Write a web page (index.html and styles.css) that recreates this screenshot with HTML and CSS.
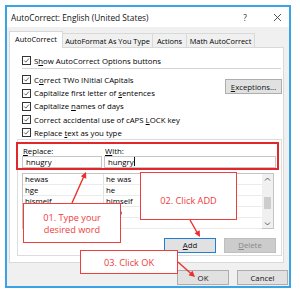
FILE: index.html
```html
<!DOCTYPE html>
<html>
<head>
<meta charset="utf-8">
<link rel="stylesheet" href="styles.css">
</head>
<body>
<div class="window">
  <div class="titlebar">
    <span class="title">AutoCorrect: English (United States)</span>
    <span class="help">?</span>
    <span class="close"><svg width="9" height="9" viewBox="0 0 9 9"><path d="M1 1L8 8M8 1L1 8" stroke="#444" stroke-width="0.9" fill="none"/></svg></span>
  </div>
  <div class="tabs">
    <div class="tab active t1">AutoCorrect</div>
    <div class="tab t2">AutoFormat As You Type</div>
    <div class="tab t3">Actions</div>
    <div class="tab t4">Math AutoCorrect</div>
  </div>
  <div class="panel">
    <div class="check"><span class="box"><svg width="9" height="9" viewBox="0 0 9 9"><path d="M1.6 4.6L3.6 6.6L7.6 2" stroke="#333" stroke-width="1" fill="none"/></svg></span><span>S<u>h</u>ow AutoCorrect Options buttons</span></div>
    <div class="sep"></div>
    <div class="opts">
      <div class="optlist">
        <div class="check"><span class="box"><svg width="9" height="9" viewBox="0 0 9 9"><path d="M1.6 4.6L3.6 6.6L7.6 2" stroke="#333" stroke-width="1" fill="none"/></svg></span><span>C<u>o</u>rrect TWo INitial CApitals</span></div>
        <div class="check"><span class="box"><svg width="9" height="9" viewBox="0 0 9 9"><path d="M1.6 4.6L3.6 6.6L7.6 2" stroke="#333" stroke-width="1" fill="none"/></svg></span><span>Capitalize first letter of <u>s</u>entences</span></div>
        <div class="check"><span class="box"><svg width="9" height="9" viewBox="0 0 9 9"><path d="M1.6 4.6L3.6 6.6L7.6 2" stroke="#333" stroke-width="1" fill="none"/></svg></span><span>Capitalize <u>n</u>ames of days</span></div>
        <div class="check"><span class="box"><svg width="9" height="9" viewBox="0 0 9 9"><path d="M1.6 4.6L3.6 6.6L7.6 2" stroke="#333" stroke-width="1" fill="none"/></svg></span><span>Correct accidental use of cAPS <u>L</u>OCK key</span></div>
        <div class="check"><span class="box"><svg width="9" height="9" viewBox="0 0 9 9"><path d="M1.6 4.6L3.6 6.6L7.6 2" stroke="#333" stroke-width="1" fill="none"/></svg></span><span>Replace <u>t</u>ext as you type</span></div>
      </div>
      <div class="btn exceptions"><u>E</u>xceptions...</div>
    </div>
    <div class="group">
      <div class="fields">
        <div class="field f-replace">
          <div class="lbl"><u>R</u>eplace:</div>
          <div class="input">hnugry</div>
        </div>
        <div class="field f-with">
          <div class="lbl"><u>W</u>ith:</div>
          <div class="input">hungry<span class="caret"></span></div>
        </div>
      </div>
      <div class="list">
        <div class="rows">
          <div class="row"><span class="c1">hewas</span><span class="c2">he was</span></div>
          <div class="row"><span class="c1">hge</span><span class="c2">he</span></div>
          <div class="row"><span class="c1">hismelf</span><span class="c2">himself</span></div>
          <div class="row"><span class="c1">hlep</span><span class="c2">help</span></div>
          <div class="row"><span class="c1">hsa</span><span class="c2">has</span></div>
        </div>
        <div class="scrollbar">
          <svg class="arr" width="11" height="9" viewBox="0 0 11 9"><path d="M3 5.5L5.5 3L8 5.5" stroke="#606060" stroke-width="1" fill="none"/></svg>
          <div class="track"><div class="thumb"></div></div>
          <svg class="arr" width="11" height="9" viewBox="0 0 11 9"><path d="M3 3.5L5.5 6L8 3.5" stroke="#606060" stroke-width="1" fill="none"/></svg>
        </div>
      </div>
      <div class="btnrow">
        <div class="btn add"><u>A</u>dd</div>
        <div class="btn disabled"><u>D</u>elete</div>
      </div>
    </div>
  </div>
  <div class="footer">
    <div class="btn ok">OK</div>
    <div class="btn cancel">Cancel</div>
  </div>
</div>

<div class="highlight"></div>
<div class="callout c-one">01. Type your<br>desired word</div>
<div class="callout c-two">02. Click ADD</div>
<div class="callout c-three">03. Click OK</div>
<svg class="arrows" width="300" height="297" viewBox="0 0 300 297">
  <g stroke="#e8302c" stroke-width="1.4" fill="#e8302c">
    <line x1="72" y1="203" x2="84" y2="176"/>
    <polygon points="86,172 86.3,178.7 80.8,176.2" stroke="none"/>
    <line x1="190" y1="220" x2="198" y2="234"/>
    <polygon points="200,237 199.7,230.3 194.5,233.2" stroke="none"/>
    <line x1="178" y1="262" x2="192" y2="274.5"/>
    <polygon points="195,277 192.5,270.8 188.5,275.3" stroke="none"/>
  </g>
</svg>
</body>
</html>
```

FILE: styles.css
```css
* { box-sizing: border-box; margin: 0; padding: 0; }
html, body { width: 300px; height: 297px; overflow: hidden; background: #fff; }
body {
  font-family: "Open Sans", "Noto Sans", sans-serif;
  font-size: 7.8px;
  color: #000;
  position: relative;
}
u { text-decoration: underline; text-underline-offset: 1px; text-decoration-thickness: 0.6px; }

.window {
  margin: 5px;
  width: 286px;
  height: 283px;
  border: 2px solid #3aa3e6;
  background: #f0f0f0;
  display: flex;
  flex-direction: column;
}

.titlebar {
  height: 20px;
  background: #fff;
  display: flex;
  align-items: center;
  padding-left: 4px;
  padding-right: 6px;
  flex-shrink: 0;
}
.title { flex: 1; font-size: 8.3px; color: #111; }
.help { width: 10px; text-align: center; font-size: 8.4px; color: #333; margin-right: 22px; }
.close { width: 11px; height: 9px; display: flex; justify-content: center; }

.tabs {
  height: 20px;
  display: flex;
  align-items: flex-end;
  padding-left: 2px;
  flex-shrink: 0;
  position: relative;
  z-index: 2;
}
.tab {
  height: 14px;
  border: 1px solid #d9d9d9;
  border-bottom: none;
  background: #f0f0f0;
  display: flex;
  align-items: center;
  justify-content: center;
  white-space: nowrap;
  margin-left: -1px;
  font-size: 7.4px;
}
.tab.active {
  height: 17px;
  background: #fff;
  margin-bottom: -1px;
  margin-left: 0;
  padding-bottom: 2px;
}
.t1 { width: 54px; }
.t2 { width: 91px; }
.t3 { width: 35px; }
.t4 { width: 69px; }

.panel {
  margin-left: 2px;
  width: 275px;
  height: 216px;
  flex-shrink: 0;
  background: #fff;
  border: 1px solid #d9d9d9;
  padding: 6px 1px 0 7px;
  display: flex;
  flex-direction: column;
}

.check {
  display: flex;
  align-items: center;
  height: 13.25px;
  margin-left: 5px;
  white-space: nowrap;
}
.box {
  width: 9px;
  height: 9px;
  border: 1px solid #333;
  background: #fff;
  margin-right: 3px;
  display: flex;
  align-items: center;
  justify-content: center;
  flex-shrink: 0;
}
.box svg { width: 7px; height: 7px; }

.sep {
  height: 1px;
  background: #d4d4d4;
  margin: 1px 1px 4px 5px;
}

.opts { display: flex; justify-content: space-between; }
.exceptions { width: 57px; height: 15px; margin-top: 6px; }

.btn {
  background: #e1e1e1;
  border: 1px solid #adadad;
  display: flex;
  align-items: center;
  justify-content: center;
  color: #111;
  white-space: nowrap;
}
.btn.add { width: 52px; height: 15px; border: 1.5px solid #1e7fd6; }
.btn.disabled { width: 52px; height: 15px; background: #cccccc; border-color: #bfbfbf; color: #888; }
.btn.ok { width: 52px; height: 15px; }
.btn.cancel { width: 51px; height: 15px; }

.group {
  width: 265px;
  height: 117px;
  margin-top: -1px;
  border: 1px solid #dcdcdc;
  padding: 6px 0 0 4px;
  display: flex;
  flex-direction: column;
}
.fields { display: flex; gap: 2px; }
.field { display: flex; flex-direction: column; }
.f-replace { width: 80px; }
.f-with { width: 172px; }
.lbl { height: 10px; line-height: 10px; padding-left: 1px; }
.input {
  height: 12px;
  border: 1px solid #c6c6c6;
  background: #fff;
  padding-left: 3px;
  display: flex;
  align-items: center;
}
.caret { width: 1px; height: 9px; background: #111; margin-left: 0.5px; }

.list {
  margin-top: 5px;
  width: 252px;
  height: 56px;
  border: 1px solid #c4c4c4;
  background: #fff;
  display: flex;
}
.rows { flex: 1; display: flex; flex-direction: column; }
.row {
  height: 11px;
  display: flex;
  align-items: center;
  border-bottom: 1px solid #ebebeb;
}
.c1 { width: 81px; height: 100%; border-right: 1px solid #e2e2e2; padding-left: 2px; display: flex; align-items: center; }
.c2 { flex: 1; padding-left: 2px; }
.scrollbar {
  width: 11px;
  background: #f0f0f0;
  display: flex;
  flex-direction: column;
}
.arr { display: block; flex-shrink: 0; margin-top: 1px; }
.track { flex: 1; padding: 13px 1px 0 2px; }
.thumb { width: 7px; height: 12px; background: #cdcdcd; }

.btnrow {
  display: flex;
  justify-content: flex-end;
  gap: 8px;
  margin-top: 9px;
  padding-right: 5px;
}

.footer {
  display: flex;
  justify-content: flex-end;
  gap: 8px;
  margin-top: 7px;
  padding-right: 1px;
}

.highlight {
  position: absolute;
  left: 16px;
  top: 142px;
  width: 263px;
  height: 28px;
  border: 2px solid #e3262a;
}
.callout {
  position: absolute;
  background: #fff;
  border: 1px solid #ee3e3e;
  color: #ef3b3b;
  font-size: 9.2px;
  text-align: center;
  line-height: 11.5px;
}
.c-one { left: 23px; top: 203px; width: 98px; height: 40px; padding-top: 8px; }
.c-two { left: 140px; top: 172px; width: 97px; height: 48px; padding-top: 22px; }
.c-three { left: 80px; top: 250px; width: 98px; height: 24px; padding-top: 5.5px; }
.arrows { position: absolute; left: 0; top: 0; pointer-events: none; }
```
